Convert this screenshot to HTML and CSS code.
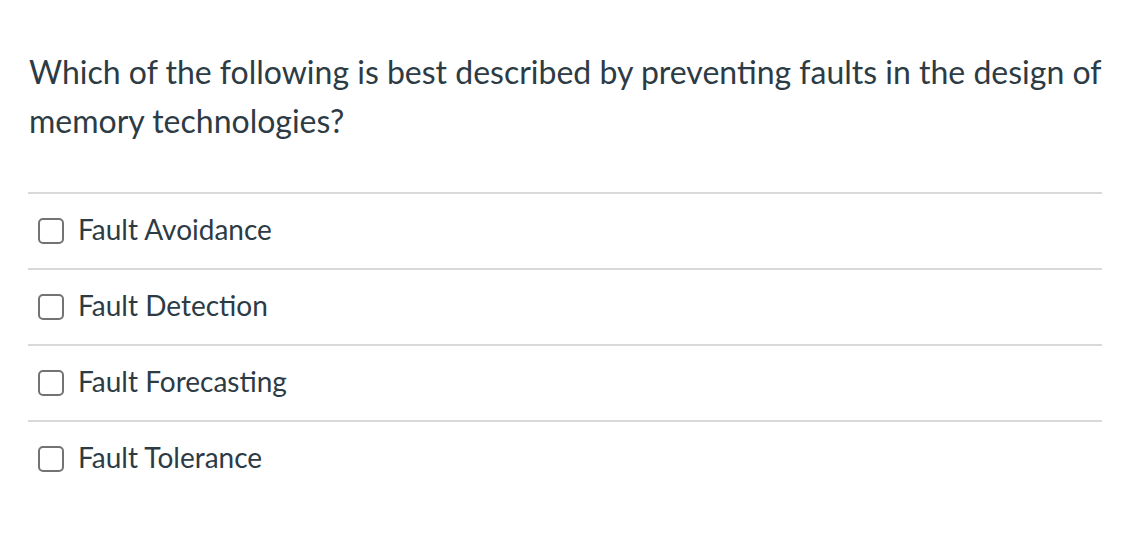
FILE: index.html
```html
<!DOCTYPE html>
<html>
<head>
<meta charset="utf-8">
<link rel="stylesheet" href="styles.css">
</head>
<body>
<div class="quiz">
  <p class="question">Which of the following is best described by preventing faults in the design of memory technologies?</p>
  <div class="answers">
    <label class="answer"><span class="box"></span><span class="label">Fault Avoidance</span></label>
    <label class="answer"><span class="box"></span><span class="label">Fault Detection</span></label>
    <label class="answer"><span class="box"></span><span class="label">Fault Forecasting</span></label>
    <label class="answer"><span class="box"></span><span class="label">Fault Tolerance</span></label>
  </div>
</div>
</body>
</html>
```
FILE: styles.css
```css
html, body {
  margin: 0;
  padding: 0;
  background: #ffffff;
}
body {
  font-family: Lato, "Open Sans", sans-serif;
  color: #2d3b45;
}
.quiz {
  width: 1074px;
  padding: 47px 0 0 28px;
}
.question {
  margin: 0 0 0 1px;
  font-size: 32px;
  line-height: 49px;
}
.answers {
  margin-top: 47px;
}
.answer {
  display: flex;
  align-items: center;
  height: 74px;
  border-top: 2px solid #d9d9d9;
  padding-left: 10px;
}
.box {
  width: 22px;
  height: 22px;
  border: 2px solid #737373;
  border-radius: 5px;
  flex: none;
}
.label {
  margin-left: 14px;
  font-size: 28px;
  line-height: 34px;
  padding-bottom: 4px;
}
```
